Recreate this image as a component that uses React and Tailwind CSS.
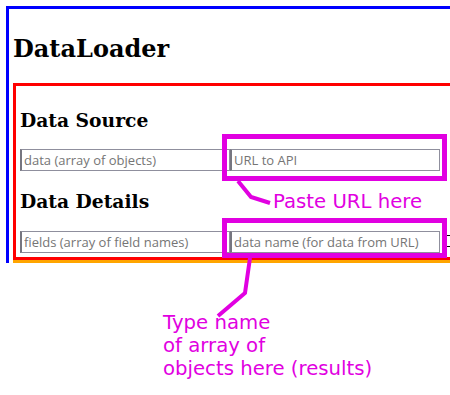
import React from "react";

const pink = "#e100e1";

function Field({ placeholder }) {
  return (
    <input
      type="text"
      placeholder={placeholder}
      className="h-[22px] w-[210px] shrink-0 border border-l-2 border-[#8f8f9d] border-l-[#767680] bg-white px-[2px] text-[13px] leading-[normal] font-['Open_Sans'] text-black placeholder:text-[#757575] outline-none"
    />
  );
}

export default function App() {
  return (
    <div className="relative h-[395px] w-[450px] overflow-hidden bg-white">
      {/* blue outer panel */}
      <div className="ml-[6px] mt-[6px] w-[520px] border-l-[3px] border-t-[3px] border-[#0000ff] px-1 pt-[5px]">
        <h2 className="my-[19.92px] text-[24px] leading-[normal] font-bold text-black font-['DejaVu_Serif',serif]">
          DataLoader
        </h2>

        {/* red inner panel */}
        <div className="border-[3px] border-r-0 border-[#ff0000] p-1">
          <h3 className="my-[18.72px] text-[18.72px] leading-[normal] font-bold text-black font-['DejaVu_Serif',serif]">
            Data Source
          </h3>
          <div className="flex">
            <Field placeholder="data (array of objects)" />
            <Field placeholder="URL to API" />
          </div>

          <h3 className="my-[18.72px] text-[18.72px] leading-[normal] font-bold text-black font-['DejaVu_Serif',serif]">
            Data Details
          </h3>
          <div className="flex items-start">
            <Field placeholder="fields (array of field names)" />
            <Field placeholder="data name (for data from URL)" />
            <div className="ml-[6px] mt-[4px] h-[12px] w-[12px] shrink-0 border border-black" />
          </div>
        </div>
        <div className="h-[3px] bg-[#ffa500]" />
      </div>

      {/* annotation overlay */}
      <svg
        className="absolute left-0 top-0"
        width="450"
        height="395"
        viewBox="0 0 450 395"
        fill="none"
      >
        <rect x="224.5" y="136.5" width="220" height="42" stroke={pink} strokeWidth="5" />
        <rect x="224.5" y="220.5" width="220" height="35" stroke={pink} strokeWidth="5" />
        <polyline points="238,181 251,197 270,203" stroke={pink} strokeWidth="4" />
        <polyline points="250,258 245,293 218,316" stroke={pink} strokeWidth="4" />
      </svg>

      <p className="absolute left-[273px] top-[190px] whitespace-nowrap text-[19.7px] leading-[23px] text-[#e100e1] font-['DejaVu_Sans',sans-serif]">
        Paste URL here
      </p>
      <p className="absolute left-[163px] top-[311px] whitespace-nowrap text-[19.7px] leading-[23px] text-[#e100e1] font-['DejaVu_Sans',sans-serif]">
        Type name
        <br />
        of array of
        <br />
        objects here (results)
      </p>
    </div>
  );
}
